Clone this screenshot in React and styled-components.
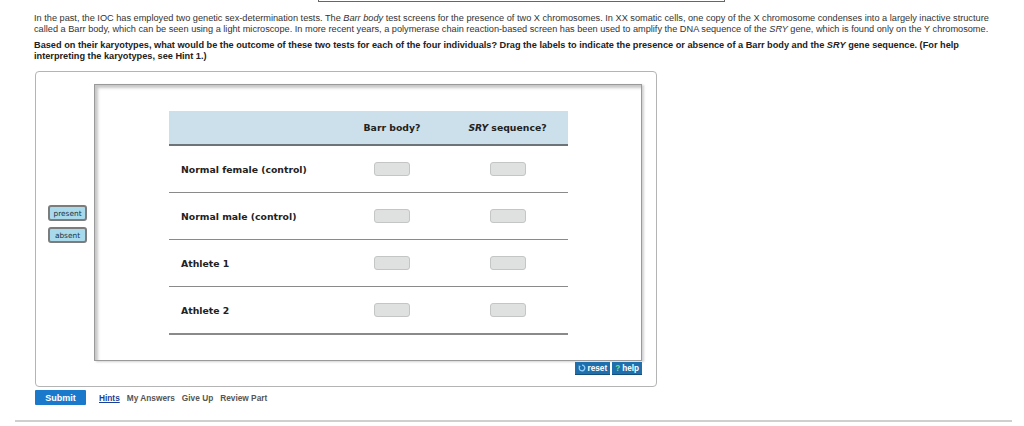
import styled, { createGlobalStyle } from 'styled-components'

const Global = createGlobalStyle`
  body {
    margin: 0;
    background: #fff;
    font-family: "Liberation Sans", Arial, sans-serif;
  }
`

const Page = styled.div`
  width: 1024px;
  height: 426px;
  overflow: hidden;
  position: relative;
`

const TopFragment = styled.div`
  margin-left: 318px;
  width: 405px;
  height: 1px;
  border: 1px solid #666;
  border-top: none;
`

const Content = styled.div`
  padding: 0 20px 0 34px;
`

const Intro = styled.p`
  margin: 11px 0 0;
  width: 970px;
  font-size: 9.2px;
  line-height: 11px;
  color: #333;
`

const Question = styled.p`
  margin: 5px 0 0;
  width: 945px;
  font-size: 9.2px;
  line-height: 11px;
  font-weight: bold;
  color: #222;
`

const Outer = styled.div`
  margin-top: 9px;
  margin-left: 1px;
  width: 622px;
  height: 316px;
  border: 1px solid #b4b4b4;
  border-radius: 4px;
  display: flex;
  box-sizing: border-box;
`

const LabelColumn = styled.div`
  width: 58px;
  display: flex;
  flex-direction: column;
  align-items: flex-start;
  padding: 133px 0 0 12px;
  gap: 6px;
  box-sizing: border-box;
`

const Chip = styled.div`
  width: 39px;
  height: 16px;
  box-sizing: border-box;
  background: #a9daeb;
  border: 2px solid #7c7c7c;
  border-radius: 3px;
  font-family: Verdana, "DejaVu Sans", sans-serif;
  font-size: 7.4px;
  color: #1a3244;
  display: flex;
  align-items: center;
  justify-content: center;
`

const Stage = styled.div`
  display: flex;
  flex-direction: column;
  align-items: flex-end;
  padding-top: 12px;
`

const Board = styled.div`
  width: 548px;
  height: 277px;
  box-sizing: border-box;
  border: 1px solid #9a9a9a;
  box-shadow: inset 3px 3px 3px rgba(0, 0, 0, 0.22), 2px 1px 2px rgba(0, 0, 0, 0.18);
  padding: 26px 0 0 74px;
`

const Table = styled.div`
  width: 399px;
  font-family: Verdana, "DejaVu Sans", sans-serif;
  font-weight: bold;
  font-size: 9.3px;
  color: #222;
`

const Row = styled.div`
  display: grid;
  grid-template-columns: 168px 110px 121px;
  align-items: center;
  height: ${p => (p.$head ? '33px' : '46px')};
  background: ${p => (p.$head ? '#cbe0eb' : 'transparent')};
  border-bottom: ${p => (p.$head ? '2px solid #6c7479' : p.$last ? '2px solid #8a8a8a' : '1px solid #8a8a8a')};
`

const Cell = styled.div`
  padding-left: ${p => (p.$left ? '12px' : '0')};
  display: flex;
  justify-content: ${p => (p.$left ? 'flex-start' : 'center')};
  white-space: nowrap;
`

const Drop = styled.div`
  width: 36px;
  height: 14px;
  box-sizing: border-box;
  background: #dfe1e0;
  border: 1px solid #c4c6c5;
  border-radius: 3px;
`

const Tools = styled.div`
  display: flex;
  gap: 2px;
  margin-top: 1px;
`

const ToolButton = styled.div`
  height: 12px;
  padding: 0 3px;
  background: #1f6fad;
  border-bottom: 1px solid #154e7c;
  color: #fff;
  font-family: "Liberation Sans", Arial, sans-serif;
  font-weight: bold;
  font-size: 8.2px;
  display: flex;
  align-items: center;
  gap: 2px;
`

const Mark = styled.span`
  color: ${p => p.$color};
`

const Actions = styled.div`
  display: flex;
  align-items: center;
  margin-top: 3px;
  margin-left: 1px;
  gap: 13px;
`

const Submit = styled.div`
  width: 51px;
  height: 15px;
  background: #1b79cc;
  border-radius: 1px;
  color: #fff;
  font-weight: bold;
  font-size: 9px;
  display: flex;
  align-items: center;
  justify-content: center;
`

const Links = styled.div`
  display: flex;
  gap: 7px;
  font-size: 8.3px;
  font-weight: bold;
  color: #555;
`

const Hint = styled.span`
  color: #1b3f96;
  text-decoration: underline;
`

const Rule = styled.div`
  position: absolute;
  left: 15px;
  right: 12px;
  top: 420px;
  border-top: 2px solid #cfcfcf;
`

const rows = ['Normal female (control)', 'Normal male (control)', 'Athlete 1', 'Athlete 2']

export default function App() {
  return (
    <Page>
      <Global />
      <TopFragment />
      <Content>
        <Intro>
          In the past, the IOC has employed two genetic sex-determination tests. The <i>Barr body</i> test screens for the presence of two X chromosomes. In XX somatic cells, one copy of the X chromosome condenses into a largely inactive structure called a Barr body, which can be seen using a light microscope. In more recent years, a polymerase chain reaction-based screen has been used to amplify the DNA sequence of the <i>SRY</i> gene, which is found only on the Y chromosome.
        </Intro>
        <Question>
          Based on their karyotypes, what would be the outcome of these two tests for each of the four individuals? Drag the labels to indicate the presence or absence of a Barr body and the <i>SRY</i> gene sequence. (For help interpreting the karyotypes, see Hint 1.)
        </Question>
        <Outer>
          <LabelColumn>
            <Chip>present</Chip>
            <Chip>absent</Chip>
          </LabelColumn>
          <Stage>
            <Board>
              <Table>
                <Row $head>
                  <Cell $left />
                  <Cell>Barr body?</Cell>
                  <Cell><i>SRY</i>&nbsp;sequence?</Cell>
                </Row>
                {rows.map((r, i) => (
                  <Row key={r} $last={i === rows.length - 1}>
                    <Cell $left>{r}</Cell>
                    <Cell><Drop /></Cell>
                    <Cell><Drop /></Cell>
                  </Row>
                ))}
              </Table>
            </Board>
            <Tools>
              <ToolButton>
                <svg width="8" height="8" viewBox="0 0 10 10">
                  <path d="M5 1.5 A3.5 3.5 0 1 1 1.8 3.6" fill="none" stroke="#8fd0ff" strokeWidth="1.6" />
                  <path d="M0.5 2 L3.4 2.4 L1.8 5 Z" fill="#8fd0ff" />
                </svg>
                reset
              </ToolButton>
              <ToolButton>
                <Mark $color="#6fe08a">?</Mark>help
              </ToolButton>
            </Tools>
          </Stage>
        </Outer>
        <Actions>
          <Submit>Submit</Submit>
          <Links>
            <Hint>Hints</Hint>
            <span>My Answers</span>
            <span>Give Up</span>
            <span>Review Part</span>
          </Links>
        </Actions>
      </Content>
      <Rule />
    </Page>
  )
}
